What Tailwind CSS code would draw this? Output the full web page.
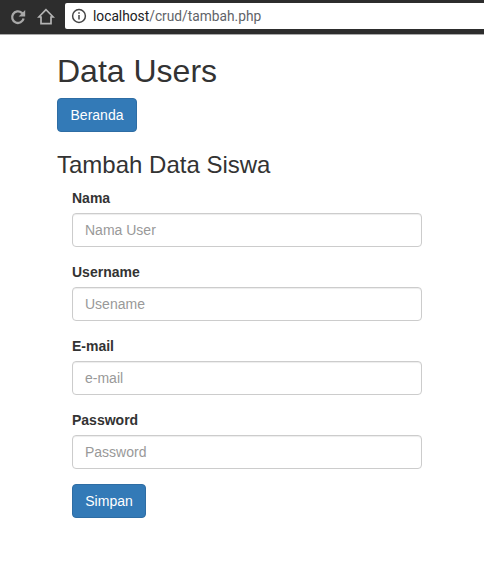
<!doctype html>
<html><head><meta charset="utf-8"><script src="https://cdn.jsdelivr.net/npm/@tailwindcss/browser@4"></script></head>
<body class="bg-white font-['Liberation_Sans',Arial,sans-serif] text-[#333] text-[14px] w-[484px] h-[587px] overflow-hidden">
<div class="h-[35px] bg-[#2d2d2d] pt-[3px] border-b border-b-[#a9a9a9] flex items-start">
  <svg class="w-[18px] h-[18px] ml-[9px] mt-[5px] text-[#a8a8a8]" viewBox="0 0 18 18" fill="none" stroke="currentColor" stroke-width="2.3"><path d="M14.6 10.5A5.8 5.8 0 1 1 12.8 4.8L15 7"/><path fill="currentColor" stroke="none" d="M16.2 2v6.6h-6.6z"/></svg>
  <svg class="w-[18px] h-[18px] ml-[10px] mt-[5px]" viewBox="0 0 18 18" fill="none"><path d="M9 1.6 1.8 9H4v6.6h10V9h2.2z" stroke="#b4b4b4" stroke-width="1.7" stroke-linejoin="miter"/></svg>
  <div class="ml-[10px] h-[26px] flex-1 bg-white rounded-l-[2px] flex items-center text-[13.75px] font-['Roboto',sans-serif]">
    <svg class="w-[16px] h-[16px] ml-[6px] text-[#444]" viewBox="0 0 16 16" fill="none" stroke="currentColor" stroke-width="1.5"><circle cx="8" cy="8" r="6.4"/><path d="M8 7v4.5M8 4.2v1.6"/></svg>
    <span class="ml-[6px] text-[#202124]">localhost</span><span class="text-[#5f6368]">/crud/tambah.php</span>
  </div>
</div>
<div class="pl-[57px] w-[437px]">
  <h1 class="text-[32px] leading-[35px] mt-[19px] font-normal">Data Users</h1>
  <button class="mt-[9px] h-[34px] w-[80px] bg-[#337ab7] border border-[#2e6da4] rounded text-white text-[14px]">Beranda</button>
  <h2 class="text-[24px] leading-[26px] mt-[20px] font-normal">Tambah Data Siswa</h2>
  <form class="pl-[15px] w-[365px] mt-[10px] flex flex-col">
    <label class="font-bold leading-[20px] block">Nama</label>
    <input placeholder="Nama User" class="mt-[5px] h-[34px] w-[350px] border border-[#ccc] rounded px-3 placeholder:text-[#999] shadow-[inset_0_1px_1px_rgba(0,0,0,0.075)]">
    <label class="font-bold leading-[20px] block mt-[15px]">Username</label>
    <input placeholder="Usename" class="mt-[5px] h-[34px] w-[350px] border border-[#ccc] rounded px-3 placeholder:text-[#999] shadow-[inset_0_1px_1px_rgba(0,0,0,0.075)]">
    <label class="font-bold leading-[20px] block mt-[15px]">E-mail</label>
    <input placeholder="e-mail" class="mt-[5px] h-[34px] w-[350px] border border-[#ccc] rounded px-3 placeholder:text-[#999] shadow-[inset_0_1px_1px_rgba(0,0,0,0.075)]">
    <label class="font-bold leading-[20px] block mt-[15px]">Password</label>
    <input placeholder="Password" class="mt-[5px] h-[34px] w-[350px] border border-[#ccc] rounded px-3 placeholder:text-[#999] shadow-[inset_0_1px_1px_rgba(0,0,0,0.075)]">
    <button class="mt-[15px] h-[34px] w-[74px] bg-[#337ab7] border border-[#2e6da4] rounded text-white text-[14px]">Simpan</button>
  </form>
</div>
</body></html>
